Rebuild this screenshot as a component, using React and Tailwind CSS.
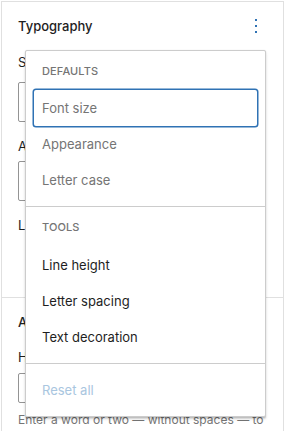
import React from "react";

function KebabIcon() {
  return (
    <svg width="24" height="24" viewBox="0 0 24 24">
      <path fill="#2f72b4" d="M13 19h-2v-2h2v2zm0-6h-2v-2h2v2zm0-6h-2V5h2v2z" />
    </svg>
  );
}

function MenuItem({ children, muted, focused, disabled }) {
  return (
    <div
      className={
        "h-[36px] flex items-center px-2 rounded-[2px] text-[13px] leading-4 " +
        (focused ? "ring-[1.5px] ring-[#2f72b4] " : "") +
        (disabled ? "text-[#a9c6e0]" : muted ? "text-[#757575]" : "text-[#1e1e1e]")
      }
    >
      {children}
    </div>
  );
}

function GroupHeading({ children, gap }) {
  return (
    <div className={"h-[24px] flex items-center px-2 text-[11px] font-medium uppercase text-[#757575] tracking-[0.01em] " + gap}>
      {children}
    </div>
  );
}

export default function App() {
  return (
    <div className="relative w-[287px] h-[431px] overflow-hidden bg-white font-['Inter',sans-serif] text-[#1e1e1e]">
      <div className="ml-[1px] mt-[1px] w-[283px] h-[440px] border border-[#e0e0e0]">
        {/* Typography panel */}
        <div className="px-4 pt-4 pb-4 border-b border-[#e0e0e0]">
          <div className="flex items-center justify-between h-4">
            <div className="text-[13px] font-medium leading-4">Typography</div>
            <div className="-mr-[1px] -my-1 flex items-center">
              <KebabIcon />
            </div>
          </div>
          <div className="mt-[20px] text-[13px] leading-4">Size</div>
          <div className="mt-[12px] w-[200px] h-[40px] border border-[#949494] rounded-[2px]" />
          <div className="mt-4 text-[13px] leading-4">Appearance</div>
          <div className="mt-[7px] w-[200px] h-[40px] border border-[#949494] rounded-[2px]" />
          <div className="mt-4 text-[13px] leading-4">Line height</div>
          <div className="mt-2 h-[40px]" />
        </div>
        {/* Advanced panel */}
        <div className="px-4 pt-4">
          <div className="text-[13px] font-medium leading-4">Advanced</div>
          <div className="mt-[19px] text-[13px] leading-4">HTML anchor</div>
          <div className="mt-2 w-[200px] h-[30px] border border-[#949494] rounded-[2px]" />
          <div className="mt-[8px] text-[12px] leading-[18px] text-[#757575]">
            Enter a word or two — without spaces — to make a unique web address just for this block.
          </div>
        </div>
      </div>

      {/* Dropdown menu */}
      <div className="absolute left-[25px] top-[50px] w-[241px] bg-white border border-[#cccccc] rounded-[2px] shadow-[0_0.7px_1px_rgba(0,0,0,0.1),0_1.2px_1.7px_-0.2px_rgba(0,0,0,0.1),0_2.3px_3.3px_-0.5px_rgba(0,0,0,0.1)]">
        <div className="p-2">
          <GroupHeading gap="mb-[7px]">Defaults</GroupHeading>
          <MenuItem muted focused>Font size</MenuItem>
          <MenuItem muted>Appearance</MenuItem>
          <MenuItem muted>Letter case</MenuItem>
        </div>
        <div className="border-t border-[#cccccc] p-2">
          <GroupHeading gap="mb-2">Tools</GroupHeading>
          <MenuItem>Line height</MenuItem>
          <MenuItem>Letter spacing</MenuItem>
          <MenuItem>Text decoration</MenuItem>
        </div>
        <div className="border-t border-[#cccccc] p-2">
          <MenuItem disabled>Reset all</MenuItem>
        </div>
      </div>
    </div>
  );
}
